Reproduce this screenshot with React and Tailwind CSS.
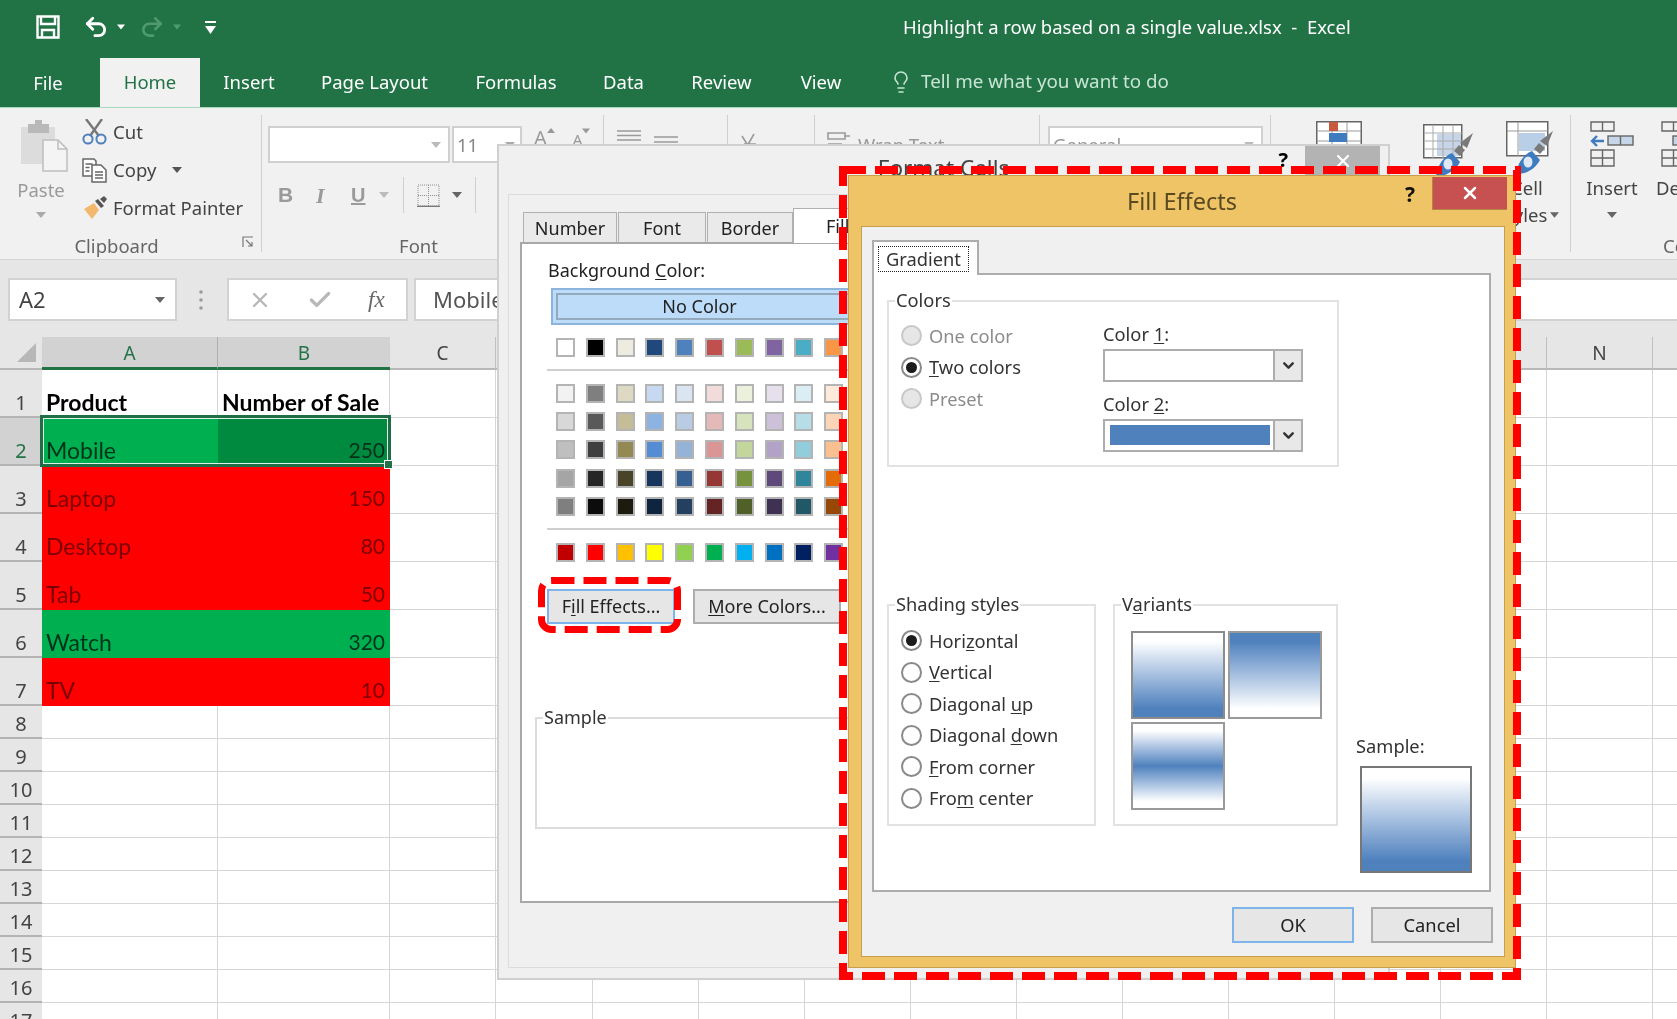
import React from "react";
import { Lightbulb, Undo2, Redo2, X, Check, ChevronDown } from "lucide-react";

const C = ["#ffffff","#000000","#eeece1","#1f497d","#4f81bd","#c0504d","#9bbb59","#8064a2","#4bacc6","#f79646"];
const T = [
  ["#f2f2f2","#7f7f7f","#ddd9c3","#c6d9f0","#dbe5f1","#f2dcdb","#ebf1dd","#e5e0ec","#dbeef3","#fdeada"],
  ["#d8d8d8","#595959","#c4bd97","#8db3e2","#b8cce4","#e5b9b7","#d7e3bc","#ccc1d9","#b7dde8","#fbd5b5"],
  ["#bfbfbf","#3f3f3f","#938953","#548dd4","#95b3d7","#d99694","#c3d69b","#b2a2c7","#92cddc","#fac08f"],
  ["#a5a5a5","#262626","#494429","#17365d","#366092","#953734","#76923c","#5f497a","#31859b","#e36c09"],
  ["#7f7f7f","#0c0c0c","#1d1b10","#0f243e","#244061","#632423","#4f6128","#3f3151","#205867","#974806"],
];
const S = ["#c00000","#ff0000","#ffc000","#ffff00","#92d050","#00b050","#00b0f0","#0070c0","#002060","#7030a0"];

function SwatchRow({ colors }) {
  return (
    <div className="flex gap-[10.8px] pl-[9px]">
      {colors.map((c, i) => (
        <div key={i} className="w-[19px] h-[19px] border-2 border-[#b4b4b4] shrink-0" style={{ backgroundColor: c }} />
      ))}
    </div>
  );
}

function Radio({ label, u, checked, disabled }) {
  const idx = u === undefined ? -1 : u;
  return (
    <div className="flex items-center h-[21px] gap-[7px] -ml-[2px] whitespace-nowrap">
      <div className={"w-[21px] h-[21px] rounded-full border-2 flex items-center justify-center shrink-0 " + (disabled ? "bg-[#e6e6e6] border-[#c8c8c8]" : "bg-white border-[#8a8a8a]")}>
        {checked && <div className="w-[11px] h-[11px] rounded-full bg-[#1c1c1c]" />}
      </div>
      <span className={disabled ? "text-[#8c8c8c]" : "text-[#333]"}>
        {idx >= 0 ? (
          <>
            {label.slice(0, idx)}
            <span className="underline underline-offset-2">{label[idx]}</span>
            {label.slice(idx + 1)}
          </>
        ) : label}
      </span>
    </div>
  );
}

function Legend({ children }) {
  return <div className="absolute left-[6px] -top-[15px] bg-white px-[1px] text-[#333] leading-[26px] whitespace-nowrap">{children}</div>;
}

function U({ children }) {
  return <span className="underline underline-offset-2">{children}</span>;
}

function Combo({ fill }) {
  return (
    <div className="flex h-[33px] w-[200px] border-2 border-[#adadad] bg-white">
      <div className="flex-1 pl-[5px] pt-[4px] pr-[3px]">
        {fill && <div className="h-[20px] bg-[#4f81bd]" />}
      </div>
      <div className="w-[28px] border-l-2 border-[#adadad] bg-[#e8e8e8] flex items-center justify-center">
        <ChevronDown size={17} strokeWidth={3.4} className="text-[#333]" />
      </div>
    </div>
  );
}

function Caret({ c = "#666", className = "" }) {
  return (
    <svg width="10" height="6" viewBox="0 0 10 6" className={className}>
      <path d="M0 0h10L5 6z" fill={c} />
    </svg>
  );
}

const RED = "text-[#7d0000]";
const GRN = "text-[#00331a]";
const ROWS = [
  { n: "1", h: "h-[48px]", a: "Product", b: "Number of Sale", bold: true },
  { n: "2", h: "h-[48px]", a: "Mobile", b: "250", fa: "bg-[#00b050]", fb: "bg-[#008a40]", ta: GRN, tb: "text-[#07301a]", sel: true },
  { n: "3", h: "h-[48px]", a: "Laptop", b: "150", fa: "bg-[#ff0000]", fb: "bg-[#ff0000]", ta: RED, tb: RED },
  { n: "4", h: "h-[48px]", a: "Desktop", b: "80", fa: "bg-[#ff0000]", fb: "bg-[#ff0000]", ta: RED, tb: RED },
  { n: "5", h: "h-[48px]", a: "Tab", b: "50", fa: "bg-[#ff0000]", fb: "bg-[#ff0000]", ta: RED, tb: RED },
  { n: "6", h: "h-[48px]", a: "Watch", b: "320", fa: "bg-[#00b050]", fb: "bg-[#00b050]", ta: GRN, tb: GRN },
  { n: "7", h: "h-[48px]", a: "TV", b: "10", fa: "bg-[#ff0000]", fb: "bg-[#ff0000]", ta: RED, tb: RED },
  { n: "8", h: "h-[33px]" }, { n: "9", h: "h-[33px]" }, { n: "10", h: "h-[33px]" }, { n: "11", h: "h-[33px]" },
  { n: "12", h: "h-[33px]" }, { n: "13", h: "h-[33px]" }, { n: "14", h: "h-[33px]" }, { n: "15", h: "h-[33px]" },
  { n: "16", h: "h-[33px]" }, { n: "17", h: "h-[33px]" },
];
const REST = ["w-[106px]", "w-[97px]", "w-[106px]", "w-[106px]", "w-[106px]", "w-[106px]", "w-[106px]", "w-[106px]", "w-[106px]", "w-[106px]", "w-[106px]", "w-[106px]", "w-[106px]"];

function Sheet() {
  return (
    <div className="font-['Lato'] text-[23px] text-black">
      <div className="flex h-[33px] font-['Noto_Sans'] text-[19px]">
        <div className="w-[42px] shrink-0 bg-[#e6e6e6] border-b-2 border-[#b8b8b8] flex items-end justify-end pr-[6px] pb-[6px]">
          <svg width="19" height="19" viewBox="0 0 19 19"><path d="M19 0v19H0z" fill="#b7b7b7" /></svg>
        </div>
        <div className="w-[176px] shrink-0 bg-[#d2d2d2] border-r border-[#aeaeae] border-b-[3px] border-b-[#217346] text-[#217346] text-center leading-[32px]">A</div>
        <div className="w-[172px] shrink-0 bg-[#d2d2d2] border-b-[3px] border-b-[#217346] text-[#217346] text-center leading-[32px]">B</div>
        {REST.map((w, i) => (
          <div key={i} className={w + " shrink-0 bg-[#e6e6e6] border-r border-[#c0c0c0] border-b-2 border-b-[#b8b8b8] text-[#444] text-center leading-[32px]"}>
            {i === 0 ? "C" : i === 11 ? "N" : ""}
          </div>
        ))}
      </div>
      {ROWS.map((r) => (
        <div key={r.n} className={"flex " + r.h}>
          <div className={"w-[42px] shrink-0 border-b-2 border-[#b4b4b4] font-['Noto_Sans'] text-[20px] flex items-end justify-center " + (r.sel ? "bg-[#d2d2d2] text-[#217346]" : "bg-[#e6e6e6] text-[#444]")}>
            <span className="leading-[27px]">{r.n}</span>
          </div>
          <div className={"w-[176px] shrink-0 border-r border-b pl-[4px] flex items-end leading-[30px] " + (r.fa ? r.fa + " border-transparent " + r.ta : "border-[#d6d6d6]") + (r.bold ? " font-bold" : "")}>
            {r.a}
          </div>
          <div className={"w-[172px] shrink-0 border-r border-b pr-[4px] flex items-end leading-[30px] " + (r.bold ? "justify-start pl-[4px] font-bold whitespace-nowrap " : "justify-end text-[21px] ") + (r.fb ? r.fb + " border-transparent " + r.tb : "border-[#d6d6d6]")}>
            {r.b}
          </div>
          {REST.map((w, i) => (
            <div key={i} className={w + " shrink-0 border-r border-b border-[#d6d6d6]"} />
          ))}
        </div>
      ))}
    </div>
  );
}

function Clipboard() {
  return (
    <svg width="48" height="52" viewBox="0 0 48 52">
      <rect x="1" y="7" width="34" height="37" fill="#dcdcdc" />
      <rect x="8" y="4" width="21" height="9" fill="#b9b9b9" />
      <rect x="15" y="0" width="7" height="6" fill="#b9b9b9" />
      <path d="M23 20h15l9 9v22H23z" fill="#f4f4f4" stroke="#bdbdbd" strokeWidth="1.5" />
      <path d="M38 20v9h9" fill="none" stroke="#bdbdbd" strokeWidth="1.5" />
    </svg>
  );
}

function Brush({ className = "" }) {
  return (
    <svg width="38" height="44" viewBox="0 0 38 44" className={className}>
      <path d="M37 0 31 15l-7-5z" fill="#7a7a7a" />
      <path d="M23 12l-5 6 6 5 5-6z" fill="#7a7a7a" />
      <path d="M16 20C9 23 2 30 0 43c10 1 20-6 24-14z" fill="#3e7cbf" />
      <ellipse cx="12" cy="31" rx="4.5" ry="5.5" fill="#dfe9f5" />
    </svg>
  );
}

function Ribbon() {
  return (
    <div className="h-[152px] bg-[#f1f1f1] border-b border-[#d4d4d4] flex text-[#444] text-[18.5px] overflow-hidden">
      {/* Clipboard */}
      <div className="w-[261px] shrink-0 flex flex-col">
        <div className="flex flex-1">
          <div className="w-[82px] shrink-0 flex flex-col items-center pt-[12px] text-[#9a9a9a]">
            <div className="ml-[6px]"><Clipboard /></div>
            <div className="leading-[24px] mt-[6px]">Paste</div>
            <Caret c="#aaa" className="mt-[10px]" />
          </div>
          <div className="flex flex-col pt-[5px]">
            <div className="flex items-center h-[38px] gap-[6px]">
              <svg width="25" height="26" viewBox="0 0 25 26">
                <path d="M4 0l13 17M20 0 8 17" stroke="#777" strokeWidth="2.4" fill="none" />
                <circle cx="6" cy="20" r="4.6" fill="none" stroke="#4f81bd" strokeWidth="2" />
                <circle cx="19" cy="20" r="4.6" fill="none" stroke="#4f81bd" strokeWidth="2" />
              </svg>
              <span>Cut</span>
            </div>
            <div className="flex items-center h-[38px] gap-[6px]">
              <svg width="25" height="25" viewBox="0 0 25 25" fill="#fff" stroke="#666" strokeWidth="1.5">
                <path d="M1 1h11l2 2v15H1z" />
                <path d="M10 7h9l5 5v12H10z" />
                <path d="M3.5 6h7M3.5 9.5h4M3.5 13h4M13 14h8M13 17h8M13 20h8" fill="none" />
              </svg>
              <span>Copy</span>
              <Caret c="#555" className="ml-[10px]" />
            </div>
            <div className="flex items-center h-[38px] gap-[5px]">
              <svg width="26" height="24" viewBox="0 0 26 24">
                <path d="M2 13 12 7l5 7-7 9z" fill="#f2b96e" />
                <path d="M13 5l6 7 3-2-6-7z" fill="#555" />
                <path d="M18 3l4-3 3 3-3 4z" fill="#555" />
              </svg>
              <span className="whitespace-nowrap">Format Painter</span>
            </div>
          </div>
        </div>
        <div className="relative h-[28px] text-center leading-[30px] text-[#666] pr-[28px]">
          Clipboard
          <svg width="12" height="12" viewBox="0 0 12 12" className="absolute right-[7px] top-[5px]" fill="none" stroke="#777" strokeWidth="1.2">
            <path d="M1 11V1h10" /><path d="M4 4l6 6M10 6v4H6" />
          </svg>
        </div>
      </div>
      <div className="w-px my-[7px] bg-[#d0d0d0] shrink-0" />
      {/* Font */}
      <div className="w-[341px] shrink-0 flex flex-col">
        <div className="flex mt-[18px] ml-[6px] items-start">
          <div className="w-[182px] h-[37px] bg-white border-2 border-[#d0d0d0] flex items-center justify-end pr-[7px]"><Caret c="#bbb" /></div>
          <div className="w-[70px] h-[37px] ml-[2px] bg-white border-2 border-[#d0d0d0] flex items-center justify-between pl-[3px] pr-[5px] text-[#888]">
            <span>11</span><Caret c="#aaa" />
          </div>
          <span className="ml-[12px] mt-[2px] text-[#999] text-[20px] leading-none">A</span>
          <svg width="8" height="5" viewBox="0 0 8 5" className="mt-[2px]"><path d="M0 5h8L4 0z" fill="#999" /></svg>
          <span className="ml-[18px] mt-[6px] text-[#999] text-[15px] leading-none">A</span>
          <Caret c="#999" className="w-[8px] mt-[2px]" />
        </div>
        <div className="flex items-center mt-[14px] ml-[16px] h-[36px] text-[#9a9a9a]">
          <span className="font-bold font-['Liberation_Sans'] text-[21px] w-[38px]">B</span>
          <span className="italic font-['Liberation_Serif'] font-bold text-[22px] w-[35px]">I</span>
          <span className="font-bold underline font-['Liberation_Sans'] text-[20px] w-[28px]">U</span>
          <Caret c="#bbb" className="mr-[14px]" />
          <div className="w-px h-[36px] bg-[#d0d0d0]" />
          <svg width="23" height="23" viewBox="0 0 23 23" className="ml-[13px]" fill="none" stroke="#909090" strokeWidth="1" strokeDasharray="1 1">
            <path d="M1 1h21v21H1zM11.5 1v21M1 11.5h21" />
            <path d="M0 22.5h23" stroke="#777" strokeDasharray="none" strokeWidth="1.6" />
          </svg>
          <Caret c="#666" className="ml-[12px]" />
          <div className="w-px h-[36px] bg-[#d0d0d0] ml-[13px]" />
        </div>
        <div className="mt-auto h-[28px] text-center leading-[30px] text-[#666] pr-[28px]">Font</div>
      </div>
      <div className="w-px my-[7px] bg-[#d0d0d0] shrink-0" />
      {/* Alignment (only its top row shows above the dialog) */}
      <div className="w-[123px] shrink-0 flex gap-[13px] pt-[22px] pl-[13px] items-start">
        <svg width="24" height="14" viewBox="0 0 24 14" stroke="#9a9a9a" strokeWidth="1.6"><path d="M0 1h24M0 5.5h24M0 10h24" /></svg>
        <svg width="24" height="14" viewBox="0 0 24 14" stroke="#9a9a9a" strokeWidth="1.6"><path d="M0 7h24M0 12h24" /></svg>
      </div>
      <div className="w-px my-[7px] bg-[#d0d0d0] shrink-0" />
      <div className="w-[86px] shrink-0 flex gap-[10px] pt-[24px] pl-[12px] items-start">
        <svg width="26" height="22" viewBox="0 0 26 22" fill="none" stroke="#9a9a9a" strokeWidth="1.6"><path d="M2 4l10 16M14 2 6 16M4 12h12" /></svg>
        <Caret c="#bbb" className="mt-[12px]" />
      </div>
      <div className="w-px my-[7px] bg-[#d0d0d0] shrink-0" />
      <div className="w-[224px] shrink-0 flex gap-[8px] pt-[24px] pl-[12px] text-[#999] items-start">
        <svg width="23" height="24" viewBox="0 0 23 24" fill="none" stroke="#9a9a9a" strokeWidth="1.6"><path d="M1 1h17v6H1zM18 4h5M1 12h14M1 17h10" /></svg>
        <span className="whitespace-nowrap leading-[26px]">Wrap Text</span>
      </div>
      <div className="w-px my-[7px] bg-[#d0d0d0] shrink-0" />
      {/* Number */}
      <div className="w-[230px] shrink-0 pt-[18px] pl-[8px]">
        <div className="w-[215px] h-[37px] bg-white border-2 border-[#d0d0d0] flex items-center justify-between pl-[3px] pr-[7px] text-[#999]">
          <span>General</span><Caret c="#bbb" />
        </div>
      </div>
      <div className="w-px my-[7px] bg-[#d0d0d0] shrink-0" />
      {/* Styles */}
      <div className="w-[299px] shrink-0 flex">
        <div className="w-[130px] pt-[13px] pl-[45px]">
          <svg width="46" height="40" viewBox="0 0 46 40">
            <rect x=".75" y=".75" width="44.5" height="38" fill="#fff" stroke="#666" strokeWidth="1.5" />
            <path d="M16 1v38M31 1v38M1 10h44M1 20h44M1 30h44" stroke="#999" />
            <rect x="13" y="1" width="9" height="9" fill="#c8593f" />
            <rect x="13" y="12" width="18" height="9" fill="#3e7cbf" />
          </svg>
        </div>
        <div className="w-[90px] relative pt-[16px] pl-[22px]">
          <svg width="40" height="35" viewBox="0 0 40 35">
            <rect x=".75" y=".75" width="38" height="33" fill="#fff" stroke="#666" strokeWidth="1.5" />
            <rect x="14" y="10" width="24" height="22" fill="#c7d5e8" />
            <path d="M10 1v33M20 1v33M30 1v33M1 9h38M1 17h38M1 25h38" stroke="#aaa" />
          </svg>
          <Brush className="absolute left-[35px] top-[25px]" />
        </div>
        <div className="flex-1 relative flex flex-col items-start">
          <svg width="43" height="36" viewBox="0 0 43 36" className="ml-[15px] mt-[13px]">
            <rect x=".75" y=".75" width="41" height="34" fill="#fff" stroke="#666" strokeWidth="1.5" />
            <path d="M1 10h41M12 1v34" stroke="#999" />
            <rect x="13" y="12" width="26" height="18" fill="#b9cfe8" />
          </svg>
          <Brush className="absolute left-[25px] top-[23px]" />
          <div className="leading-[27px] mt-[17px] ml-[20px] whitespace-nowrap">Cell</div>
          <div className="flex items-center leading-[27px] gap-[3px] ml-[6px] whitespace-nowrap">Styles <Caret c="#666" className="w-[9px]" /></div>
        </div>
      </div>
      <div className="w-px my-[7px] bg-[#d0d0d0] shrink-0" />
      {/* Cells */}
      <div className="flex-1 flex flex-col">
        <div className="flex">
          <div className="w-[82px] shrink-0 flex flex-col items-center pt-[13px]">
            <svg width="44" height="46" viewBox="0 0 44 46" fill="none" stroke="#666" strokeWidth="1.4">
              <path d="M1 1h23v9H1zM12.5 1v9M1 29h23v16H1zM12.5 29v16M1 37h23" />
              <rect x="18" y="15" width="25" height="9" fill="#c7d5e8" />
              <path d="M30.5 15v9" />
              <path d="M14 20H3M7 15l-5 5 5 5" stroke="#3e7cbf" strokeWidth="2.4" />
            </svg>
            <div className="leading-[26px] mt-[8px]">Insert</div>
            <Caret c="#666" className="mt-[11px]" />
          </div>
          <div className="pt-[13px] pl-[3px] flex flex-col items-start">
            <svg width="34" height="46" viewBox="0 0 34 46" fill="none" stroke="#666" strokeWidth="1.4" className="ml-[5px]">
              <path d="M1 1h30v9H1zM12.5 1v9M1 29h30v16H1zM12.5 29v16M1 37h30" />
              <rect x="12" y="15" width="22" height="9" fill="#c7d5e8" />
            </svg>
            <div className="leading-[26px] mt-[8px]">Delete</div>
          </div>
        </div>
        <div className="mt-auto h-[28px] leading-[30px] pl-[92px] text-[#666]">Cells</div>
      </div>
    </div>
  );
}

function FormatCells() {
  return (
    <div className="absolute isolate left-[497px] top-[144px] w-[893px] h-[836px] bg-[#f0f0f0] border-2 border-[#d0d0d0] flex flex-col font-['Noto_Sans'] text-[18px] text-[#222]">
      <div className="h-[48px] shrink-0 relative flex justify-center text-[22.5px] leading-[44px] text-[#444]">
        Format Cells
        <span className="absolute right-[100px] top-0 font-bold text-black text-[20px] leading-[28px]">?</span>
        <div className="absolute right-[8px] top-0 w-[75px] h-[30px] bg-[#b3b3b3] flex items-center justify-center">
          <X size={20} strokeWidth={2.6} className="text-white" />
        </div>
      </div>
      <div className="mx-[9px] h-[774px] border border-[#dcdcdc] px-[11px] flex flex-col">
        <div className="flex h-[47px] shrink-0 pl-[3px] items-end">
          <div className="w-[94px] h-[30px] border border-b-0 border-[#b0b0b0] bg-[#eaeaea] text-center leading-[30px]">Number</div>
          <div className="w-[88px] h-[30px] ml-[1px] border border-b-0 border-[#b0b0b0] bg-[#eaeaea] text-center leading-[30px]">Font</div>
          <div className="w-[86px] h-[30px] ml-[1px] border border-b-0 border-[#b0b0b0] bg-[#eaeaea] text-center leading-[30px]">Border</div>
          <div className="w-[100px] h-[35px] border border-b-0 border-[#b0b0b0] bg-white pl-[32px] leading-[34px] -mb-px relative z-10">Fill</div>
        </div>
        <div className="h-[661px] shrink-0 bg-white border-2 border-[#a8a8a8] pl-[25px] pr-[14px] pt-[13px] flex flex-col">
          <div className="leading-[26px] ml-[1px]">Background <U>C</U>olor:</div>
          <div className="mt-[5px] ml-[4px] h-[37px] border-2 border-[#8db4dc] bg-[#bcdcfa] p-[3px]">
            <div className="h-full border-2 border-[#93a9bd] flex items-center justify-center pr-[193px] w-[480px]">No Color</div>
          </div>
          <div className="mt-[13px]"><SwatchRow colors={C} /></div>
          <div className="h-[2px] bg-[#cfcfcf] mt-[12px] mb-[13px]" />
          <div className="flex flex-col gap-[9.2px]">
            {T.map((r, i) => <SwatchRow key={i} colors={r} />)}
          </div>
          <div className="h-[2px] bg-[#cfcfcf] mt-[12px] mb-[13px]" />
          <SwatchRow colors={S} />
          <div className="flex gap-[18px] mt-[27px]">
            <div className="w-[128px] h-[35px] border-2 border-[#7eb4ea] bg-[#e6e6e6] flex items-center justify-center">F<U>i</U>ll Effects...</div>
            <div className="w-[148px] h-[35px] border-2 border-[#adadad] bg-[#e6e6e6] flex items-center justify-center whitespace-nowrap"><U>M</U>ore Colors...</div>
          </div>
          <div className="relative mt-[93px] -ml-[12px] w-[800px] h-[112px] border-2 border-[#dcdcdc]">
            <Legend>Sample</Legend>
          </div>
        </div>
      </div>
    </div>
  );
}

function FillEffects() {
  return (
    <div className="absolute isolate left-[848px] top-[175px] w-[668px] h-[793px] bg-[#efc466] border border-[#c7a04e] flex flex-col font-['Noto_Sans'] text-[18.3px] text-[#333]">
      <div className="h-[50px] shrink-0 relative flex justify-center text-[23.5px] leading-[50px] text-[#5a4a22]">
        Fill Effects
        <span className="absolute right-[100px] top-[-7px] font-bold text-[#111] text-[21px]">?</span>
        <div className="absolute right-[8px] top-[1px] w-[75px] h-[33px] bg-[#c75050] border-b border-l border-[#b5863f] flex items-center justify-center">
          <X size={20} strokeWidth={3} className="text-white" />
        </div>
      </div>
      <div className="ml-[12px] mr-[10px] h-[731px] bg-[#f0f0f0] border border-[#c7a04e] flex flex-col pl-[10px] pr-[13px]">
        <div className="h-[46px] shrink-0 flex items-end">
          <div className="w-[107px] h-[35px] bg-white border-2 border-b-0 border-[#adadad] -mb-[2px] relative z-10 pl-[4px] pr-[8px] pt-[4px]">
            <div className="h-[26px] border border-dotted border-[#222] flex items-center justify-center">Gradient</div>
          </div>
        </div>
        <div className="h-[619px] shrink-0 bg-white border-2 border-[#adadad] pl-[13px] pt-[25px] flex flex-col">
          <div className="relative w-[452px] h-[167px] border-2 border-[#e2e2e2] flex">
            <Legend>Colors</Legend>
            <div className="w-[214px] pt-[23px] pl-[14px] flex flex-col gap-[10.5px]">
              <Radio label="One color" disabled />
              <Radio label="Two colors" u={0} checked />
              <Radio label="Preset" disabled />
            </div>
            <div className="pt-[19px] leading-[26px]">
              <div>Color <U>1</U>:</div>
              <div className="mt-[2px]"><Combo /></div>
              <div className="mt-[9px]">Color <U>2</U>:</div>
              <div className="mt-[2px]"><Combo fill /></div>
            </div>
          </div>
          <div className="flex mt-[137px]">
            <div className="relative w-[209px] h-[222px] border-2 border-[#e2e2e2] pl-[14px] pt-[24px] flex flex-col gap-[10.5px]">
              <Legend>Shading styles</Legend>
              <Radio label="Horizontal" u={4} checked />
              <Radio label="Vertical" u={0} />
              <Radio label="Diagonal up" u={9} />
              <Radio label="Diagonal down" u={9} />
              <Radio label="From corner" u={0} />
              <Radio label="From center" u={3} />
            </div>
            <div className="relative w-[225px] h-[222px] ml-[17px] border-2 border-[#e2e2e2] pl-[16px] pt-[25px]">
              <Legend>V<U>a</U>riants</Legend>
              <div className="grid grid-cols-[94px_94px] grid-rows-[88px_88px] gap-[3px]">
                <div className="border-2 border-[#8c8c8c] bg-gradient-to-b from-white from-10% to-[#4f81bd] to-90%" />
                <div className="border-2 border-[#9a9a9a] bg-gradient-to-b from-[#4f81bd] from-10% to-white to-90%" />
                <div className="border-2 border-[#9a9a9a] bg-gradient-to-b from-white from-8% via-[#4f81bd] to-white to-92%" />
              </div>
            </div>
            <div className="ml-[18px] w-[117px] flex flex-col pt-[129px]">
              <div className="leading-[26px]">Sample:</div>
              <div className="mt-[7px] ml-[4px] w-[112px] h-[107px] border-2 border-[#777] bg-gradient-to-b from-white from-10% to-[#4f81bd] to-90%" />
            </div>
          </div>
        </div>
        <div className="flex-1 flex justify-end gap-[17px] pt-[15px] -mr-[2px]">
          <div className="w-[122px] h-[36px] border-2 border-[#7eb4ea] bg-[#e6e6e6] flex items-center justify-center text-[#222]">OK</div>
          <div className="w-[122px] h-[36px] border-2 border-[#adadad] bg-[#e6e6e6] flex items-center justify-center text-[#222]">Cancel</div>
        </div>
      </div>
    </div>
  );
}

export default function App() {
  return (
    <div className="relative w-[1677px] h-[1019px] overflow-hidden bg-white font-['Noto_Sans'] text-[18.5px] blur-[0.4px]">
      {/* Title + tabs */}
      <div className="h-[108px] bg-[#217346] border-b border-[#a9d8bd] flex flex-col text-white">
        <div className="h-[58px] flex items-center pl-[36px] pb-[4px]">
          <svg width="24" height="24" viewBox="0 0 24 24" fill="none" stroke="#fff" strokeWidth="2.4">
            <path d="M1.5 1.5h21v21h-21z" />
            <path d="M5 2v7h14V2" />
            <path d="M6 22v-7h12v7" />
          </svg>
          <Undo2 size={26} strokeWidth={2.6} className="ml-[23px]" />
          <Caret c="#fff" className="ml-[8px] w-[8px]" />
          <Redo2 size={26} strokeWidth={2.4} className="ml-[14px] text-[#4f9a72]" />
          <Caret c="#4f9a72" className="ml-[8px] w-[8px]" />
          <svg width="11" height="13" viewBox="0 0 11 13" className="ml-[24px]" fill="#fff"><path d="M0 0h11v2H0zM0 5h11L5.5 13z" /></svg>
          <span className="ml-[687px] text-[18.5px] whitespace-nowrap leading-none">Highlight a row based on a single value.xlsx &nbsp;- &nbsp;Excel</span>
        </div>
        <div className="flex h-[49px] items-stretch">
          <div className="w-[96px] text-center leading-[50px]">File</div>
          <div className="w-[100px] ml-[4px] bg-[#f1f1f1] text-[#217346] text-center leading-[48px]">Home</div>
          <div className="flex ml-[25px] gap-[48px] leading-[48px] whitespace-nowrap">
            <div className="w-[48px] flex justify-center">Insert</div>
            <div className="w-[107px] flex justify-center">Page Layout</div>
            <div className="w-[80px] flex justify-center">Formulas</div>
            <div className="w-[39px] flex justify-center">Data</div>
            <div className="w-[61px] flex justify-center">Review</div>
            <div className="w-[42px] flex justify-center">View</div>
          </div>
          <div className="flex items-center ml-[47px] gap-[8px] text-[#c7e4d4] pb-[2px] whitespace-nowrap">
            <Lightbulb size={24} strokeWidth={1.6} />
            <span className="text-[18.8px]">Tell me what you want to do</span>
          </div>
        </div>
      </div>
      <Ribbon />
      {/* Formula band */}
      <div className="h-[77px] bg-[#e6e6e6] pt-[18px] flex items-start">
        <div className="ml-[8px] w-[169px] h-[43px] bg-white border-2 border-[#d2d2d2] flex items-center justify-between pl-[9px] pr-[9px] text-[#444] text-[22px]">
          <span>A2</span><Caret c="#666" className="w-[12px]" />
        </div>
        <svg width="4" height="20" viewBox="0 0 4 20" className="ml-[22px] mt-[12px]" fill="#9c9c9c"><circle cx="2" cy="2" r="1.8" /><circle cx="2" cy="10" r="1.8" /><circle cx="2" cy="18" r="1.8" /></svg>
        <div className="ml-[24px] w-[181px] h-[43px] bg-white border-2 border-[#d2d2d2] flex items-center pl-[19px] text-[#b8b8b8]">
          <X size={24} strokeWidth={2.4} />
          <Check size={26} strokeWidth={3} className="ml-[35px]" />
          <span className="ml-[35px] font-['Liberation_Serif'] italic text-[#666] text-[23px] leading-none">fx</span>
        </div>
        <div className="ml-[6px] flex-1 h-[43px] bg-white border-y-2 border-l-2 border-[#d2d2d2] flex items-center pl-[17px] text-[#555] text-[22px]">Mobile</div>
      </div>
      <Sheet />
      {/* Selection of A2:B2 */}
      <div className="absolute left-[40px] top-[415px] w-[351px] h-[52px] border-[3px] border-[#1f6e45]">
        <div className="w-full h-full border border-[#e0f0e6]" />
        <div className="absolute -right-[5px] -bottom-[5px] w-[9px] h-[9px] bg-[#217346] border border-white" />
      </div>
      <FormatCells />
      <FillEffects />
      {/* Red highlight annotations */}
      <svg className="absolute left-[839px] top-[166px]" width="682" height="814" viewBox="0 0 682 814" fill="none">
        <rect x="4" y="4" width="674" height="806" stroke="#ff0000" strokeWidth="8" strokeDasharray="23 9" />
      </svg>
      <svg className="absolute left-[538px] top-[577px]" width="143" height="56" viewBox="0 0 143 56" fill="none">
        <rect x="3.5" y="3.5" width="136" height="49" rx="10" stroke="#ff0000" strokeWidth="7" strokeDasharray="23 9" />
      </svg>
    </div>
  );
}
